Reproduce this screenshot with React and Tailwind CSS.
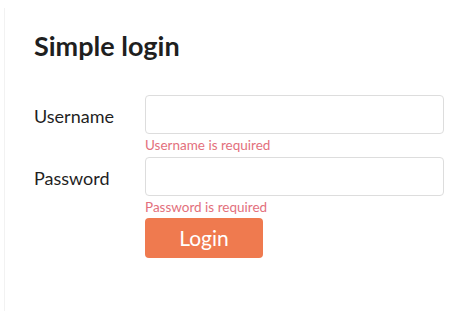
import React, { useState } from 'react';

function App() {
    const [username, setUsername] = useState("");
    const [password, setPassword] = useState("");

    const handleSubmit = (e) => {
        e.preventDefault();
    };

    return (
        <div className="w-[474px] h-[311px] bg-white overflow-hidden" style={{ fontFamily: 'Lato, "Open Sans", sans-serif' }}>
            <div className="ml-[4px] mt-[8px] h-[303px] border-l border-[#f2f2f2] pl-[29px] pt-[23px]">
                <h1 className="text-[27px] leading-[30px] font-bold text-[#1f1f1f]">Simple login</h1>

                <form onSubmit={handleSubmit} className="mt-[34px] w-[410px]">
                    <div className="flex items-center">
                        <label className="w-[111px] pt-[3px] text-[18px] text-[#1f1f1f]">Username</label>
                        <input value={username} onChange={(e) => setUsername(e.target.value)} className="w-[299px] h-[39px] px-3 rounded-[4px] border border-[#dddddd] bg-white focus:outline-none" />
                    </div>
                    <p className="ml-[111px] text-[13.5px] leading-[22px] text-[#e3707c]">Username is required</p>

                    <div className="flex items-center mt-[1px]">
                        <label className="w-[111px] pt-[3px] text-[18px] text-[#1f1f1f]">Password</label>
                        <input type="password" value={password} onChange={(e) => setPassword(e.target.value)} className="w-[299px] h-[39px] px-3 rounded-[4px] border border-[#dddddd] bg-white focus:outline-none" />
                    </div>
                    <p className="ml-[111px] text-[13.5px] leading-[22px] text-[#e3707c]">Password is required</p>

                    <button type="submit" className="ml-[111px] w-[118px] h-[40px] rounded-[4px] bg-[#ef7a4f] text-white text-[21px]">Login</button>
                </form>
            </div>
        </div>
    );
}

export default App;
